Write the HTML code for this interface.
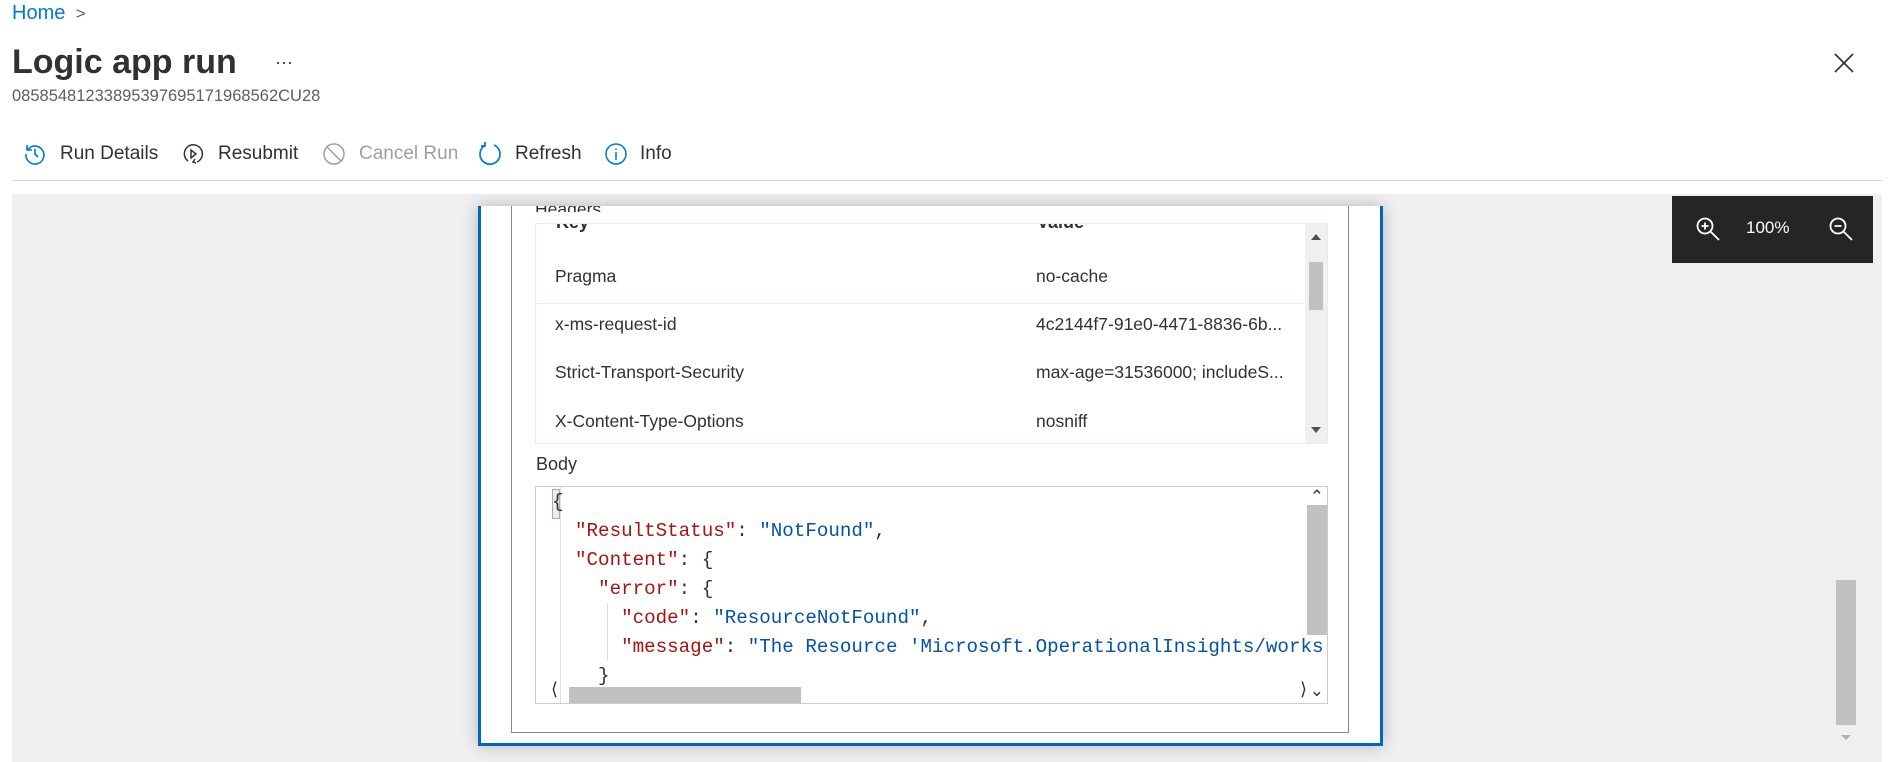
<!DOCTYPE html>
<html><head><meta charset="utf-8"><style>
*{box-sizing:border-box;margin:0;padding:0}
body{width:1892px;height:762px;overflow:hidden;background:#fff;font-family:"Segoe UI","Liberation Sans",sans-serif;color:#323130;position:relative}
.abs{position:absolute}
.tb{position:absolute;top:141px;font-size:19px;white-space:nowrap;line-height:26px}
.mono{font-family:"Liberation Mono",monospace;font-size:19.2px;white-space:pre;position:absolute;left:552px;line-height:29px}
.k{color:#a31515}.s{color:#0451a5}
.row{position:absolute;left:555px;font-size:17.5px;color:#323130}
.val{position:absolute;left:1036px;font-size:17.5px;color:#323130}
</style></head><body>
<div class="abs" style="left:12px;top:0;font-size:20px;color:#0078d4;line-height:26px">Home <span style="color:#605e5c;font-size:17px">&nbsp;&gt;</span></div>
<div class="abs" style="left:12px;top:40px;font-size:34px;font-weight:600;color:#323130;line-height:44px">Logic app run</div>
<div class="abs" style="left:275px;top:52px;font-size:18px;color:#323130">···</div>
<div class="abs" style="left:12px;top:87px;font-size:16.5px;color:#605e5c">08585481233895397695171968562CU28</div>
<svg class="abs" style="left:1834px;top:53px" width="20" height="20" viewBox="0 0 20 20"><path d="M1 1L19 19M19 1L1 19" stroke="#323130" stroke-width="1.6"/></svg>

<svg class="abs" style="left:23px;top:142px" width="24" height="24" viewBox="0 0 24 24" fill="none" stroke="#0078d4" stroke-width="1.6"><path d="M4.5 8A9 9 0 1 1 3 12"/><path d="M4 3v5h5"/><path d="M12 7v5l3 3"/></svg>
<div class="tb" style="left:60px">Run Details</div>
<svg class="abs" style="left:181px;top:142px" width="24" height="24" viewBox="0 0 24 24" fill="none" stroke="#323130" stroke-width="1.5"><path d="M7 19A9 9 0 1 1 16 20"/><path d="M10 8l5 4-5 4z"/><path d="M14 17l-2 3 3 1"/></svg>
<div class="tb" style="left:218px">Resubmit</div>
<svg class="abs" style="left:322px;top:142px" width="24" height="24" viewBox="0 0 24 24" fill="none" stroke="#a19f9d" stroke-width="1.5"><circle cx="12" cy="12" r="10"/><path d="M5 5l14 14"/></svg>
<div class="tb" style="left:359px;color:#a19f9d">Cancel Run</div>
<svg class="abs" style="left:478px;top:141px" width="24" height="26" viewBox="0 0 24 26" fill="none" stroke="#0078d4" stroke-width="1.7"><path d="M16 4A10 10 0 1 1 7 4.5"/><path d="M7 1v4H3"/></svg>
<div class="tb" style="left:515px">Refresh</div>
<svg class="abs" style="left:604px;top:142px" width="24" height="24" viewBox="0 0 24 24" fill="none" stroke="#0078d4" stroke-width="1.5"><circle cx="12" cy="12" r="10"/><path d="M12 10v8M12 6.5v1.5"/></svg>
<div class="tb" style="left:640px">Info</div>
<div class="abs" style="left:12px;top:180px;width:1870px;height:1px;background:#d6d6d6"></div>

<div class="abs" style="left:12px;top:194px;width:1870px;height:568px;background:#f0f0f0;overflow:hidden">
 <div class="abs" style="left:466px;top:12px;width:905px;height:540px;background:#fff;border-left:3px solid #0067c0;border-right:3px solid #0067c0;border-bottom:3px solid #0067c0;box-shadow:0 0 16px rgba(0,0,0,.25)"></div>
 <div class="abs" style="left:499px;top:12px;width:838px;height:527px;border-left:1px solid #888;border-right:1px solid #888;border-bottom:1px solid #888;background:#fff"></div>
</div>
<div class="abs" style="left:535px;top:206px;font-size:17.5px;color:#323130;height:6px;overflow:hidden;line-height:6px">Headers</div>
<div class="abs" style="left:535px;top:223px;width:793px;height:221px;border:1px solid #f6e6ea;background:#fff;overflow:hidden">
 <div class="abs" style="left:20px;top:-12px;font-size:18px;font-weight:700">Key</div>
 <div class="abs" style="left:501px;top:-12px;font-size:18px;font-weight:700">Value</div>
 <div class="abs" style="left:0;top:79px;width:769px;height:1px;background:#f6e6ea"></div>
 <div class="abs" style="right:0;top:0;width:22px;height:221px;background:#f0f0f0"></div>
 <div class="abs" style="right:4px;top:38px;width:14px;height:48px;background:#c1c1c1"></div>
 <div class="abs" style="right:6px;top:10px;width:0;height:0;border-left:5px solid transparent;border-right:5px solid transparent;border-bottom:6px solid #505050"></div>
 <div class="abs" style="right:6px;top:203px;width:0;height:0;border-left:5px solid transparent;border-right:5px solid transparent;border-top:6px solid #505050"></div>
</div>
<div class="row" style="top:266px">Pragma</div><div class="val" style="top:266px">no-cache</div>
<div class="row" style="top:314px">x-ms-request-id</div><div class="val" style="top:314px">4c2144f7-91e0-4471-8836-6b...</div>
<div class="row" style="top:362px">Strict-Transport-Security</div><div class="val" style="top:362px">max-age=31536000; includeS...</div>
<div class="row" style="top:411px">X-Content-Type-Options</div><div class="val" style="top:411px">nosniff</div>
<div class="abs" style="left:536px;top:454px;font-size:18px">Body</div>
<div class="abs" style="left:535px;top:486px;width:793px;height:218px;border:1px solid #ccc;background:#fffffe;overflow:hidden">
 <div class="abs" style="left:16px;top:2px;width:8px;height:30px;background:#e8efe8;border:1px solid #aaa"></div>
 <div class="abs" style="left:24px;top:0;width:1px;height:218px;background:#e0e0e0"></div>
 <div class="abs" style="left:71px;top:116px;width:1px;height:58px;background:#ddd"></div>
 <div class="abs" style="right:0;top:18px;width:20px;height:130px;background:#c1c1c1"></div>
 <div class="abs" style="left:33px;top:200px;width:232px;height:18px;background:#c1c1c1"></div>
 <div class="abs" style="right:3px;top:0;font-size:17px;color:#333">&#8963;</div>
 <div class="abs" style="left:15px;top:192px;font-size:18px;color:#333">&#10216;</div>
 <div class="abs" style="right:20px;top:192px;font-size:18px;color:#333">&#10217;</div>
 <div class="abs" style="right:3px;top:194px;font-size:17px;color:#333">&#8964;</div>
</div>
<div class="mono" style="top:488px;overflow:hidden;width:772px;height:214px">{
  <span class="k">"ResultStatus"</span>: <span class="s">"NotFound"</span>,
  <span class="k">"Content"</span>: {
    <span class="k">"error"</span>: {
      <span class="k">"code"</span>: <span class="s">"ResourceNotFound"</span>,
      <span class="k">"message"</span>: <span class="s">"The Resource 'Microsoft.OperationalInsights/works</span>
    }
</div>

<div class="abs" style="left:1672px;top:196px;width:201px;height:67px;background:#252525;color:#fff">
 <svg class="abs" style="left:23px;top:20px" width="26" height="26" viewBox="0 0 26 26" fill="none" stroke="#fff" stroke-width="1.8"><circle cx="10" cy="10" r="7.5"/><path d="M15.5 15.5L24 24M10 6.5v7M6.5 10h7"/></svg>
 <div class="abs" style="left:74px;top:22px;font-size:17px">100%</div>
 <svg class="abs" style="left:156px;top:20px" width="26" height="26" viewBox="0 0 26 26" fill="none" stroke="#fff" stroke-width="1.8"><circle cx="10" cy="10" r="7.5"/><path d="M15.5 15.5L24 24M6.5 10h7"/></svg>
</div>
<div class="abs" style="left:1836px;top:580px;width:20px;height:145px;background:#c1c1c1"></div>
<div class="abs" style="left:1841px;top:735px;width:0;height:0;border-left:5px solid transparent;border-right:5px solid transparent;border-top:5px solid #b0b0b0"></div>
</body></html>
